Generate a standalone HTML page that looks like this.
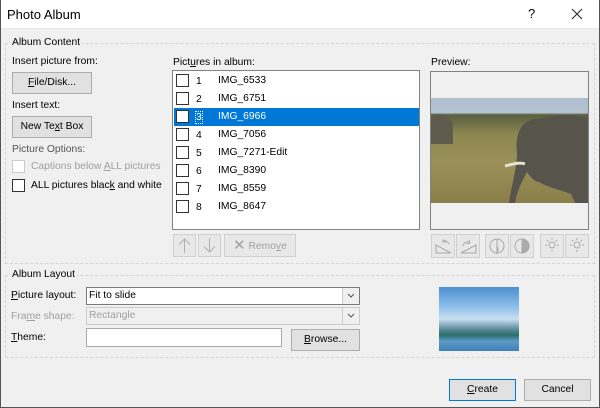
<!DOCTYPE html>
<html><head><style>
*{margin:0;padding:0;box-sizing:border-box}
body{width:600px;height:408px;overflow:hidden;background:#f0f0f0;font-family:"Liberation Sans",sans-serif;font-size:10.3px;color:#000;position:relative}
.a{position:absolute;white-space:nowrap}
.win{position:absolute;left:0;top:0;width:600px;height:408px;border:1px solid #555;border-top:none}
.title{position:absolute;left:0;top:0;width:600px;height:29px;background:#fff;border-bottom:1px solid #e6e6e6}
.grp{position:absolute;border:1px dashed #d5d5d5}
.lbl{background:#f0f0f0;padding:0 2px}
.btn{position:absolute;background:#e1e1e1;border:1px solid #adadad;text-align:center}
.dis{color:#a0a0a0;border-color:#d0d0d0;background:#e8e8e8}
.cb{position:absolute;width:13px;height:13px;border:1px solid #333;background:#fff}
.row{position:absolute;left:1px;width:245px;height:18px}
.row .cb{left:2px;top:2px}
.row .n{position:absolute;left:22px;top:4px}
.row .t{position:absolute;left:44px;top:3px}
u{text-decoration:underline}
.sel{position:absolute;background:#fff;border:1px solid #7a7a7a;height:18px}
.dd{position:absolute;right:0;top:0;width:17px;height:16px;border-left:1px solid #ccc;background:#f0f0f0}
</style></head><body>
<div class="title"></div>
<div class="a" style="left:7px;top:7px;font-size:13px">Photo Album</div>
<div class="a" style="left:528px;top:6px;font-size:13px">?</div>
<svg class="a" style="left:571px;top:8px" width="12" height="12"><path d="M1 1L11 11M11 1L1 11" stroke="#333" stroke-width="1.2"/></svg>

<div class="grp" style="left:5px;top:43px;width:590px;height:221px"></div>
<div class="a lbl" style="left:10px;top:37px">Album Content</div>
<div class="a" style="left:12px;top:56px">Insert picture from:</div>
<div class="btn" style="left:12px;top:72px;width:80px;height:22px;line-height:20px"><u>F</u>ile/Disk...</div>
<div class="a" style="left:12px;top:100px">Insert text:</div>
<div class="btn" style="left:12px;top:116px;width:80px;height:22px;line-height:20px">New Te<u>x</u>t Box</div>
<div class="a" style="left:12px;top:144px;color:#555">Picture Options:</div>
<div class="cb" style="left:12px;top:160px;border-color:#ccc"></div>
<div class="a" style="left:31px;top:161px;color:#a0a0a0">Captions below <u>A</u>LL pictures</div>
<div class="cb" style="left:12px;top:179px"></div>
<div class="a" style="left:31px;top:180px">ALL pictures blac<u>k</u> and white</div>

<div class="a" style="left:173px;top:57px">Pict<u>u</u>res in album:</div>
<div class="a" style="left:172px;top:70px;width:248px;height:160px;background:#fff;border:1px solid #828282">
<div class="row" style="top:1px"><div class="cb"></div><span class="n">1</span><span class="t">IMG_6533</span></div>
<div class="row" style="top:19px"><div class="cb"></div><span class="n">2</span><span class="t">IMG_6751</span></div>
<div class="row" style="top:37px;background:#0078d7;color:#fff"><div class="cb"></div><span class="n" style="outline:1px dotted #fff">3</span><span class="t">IMG_6966</span></div>
<div class="row" style="top:55px"><div class="cb"></div><span class="n">4</span><span class="t">IMG_7056</span></div>
<div class="row" style="top:73px"><div class="cb"></div><span class="n">5</span><span class="t">IMG_7271-Edit</span></div>
<div class="row" style="top:91px"><div class="cb"></div><span class="n">6</span><span class="t">IMG_8390</span></div>
<div class="row" style="top:109px"><div class="cb"></div><span class="n">7</span><span class="t">IMG_8559</span></div>
<div class="row" style="top:127px"><div class="cb"></div><span class="n">8</span><span class="t">IMG_8647</span></div>
</div>
<div class="btn dis" style="left:173px;top:234px;width:23px;height:23px"><svg width="21" height="21"><path d="M10.5 4V18M5 9.5L10.5 4L16 9.5" stroke="#b0b0b0" fill="none"/></svg></div>
<div class="btn dis" style="left:198px;top:234px;width:23px;height:23px"><svg width="21" height="21"><path d="M10.5 3V17M5 11.5L10.5 17L16 11.5" stroke="#b0b0b0" fill="none"/></svg></div>
<div class="btn dis" style="left:224px;top:234px;width:72px;height:23px;line-height:21px;text-align:left;padding-left:8px"><span style="font-size:15px;vertical-align:-1px">✕</span> Remo<u>v</u>e</div>

<div class="a" style="left:431px;top:57px">Preview:</div>
<div class="a" style="left:430px;top:71px;width:159px;height:159px;border:1px solid #828282;background:#f0f0f0;overflow:hidden">
<div style="position:absolute;left:0;top:26px;width:157px;height:105px;background:linear-gradient(180deg,#aebfd0 0,#b5c3cf 14%,#5a6040 16%,#6f6f48 24%,#8e8650 35%,#9a9058 60%,#8a7f4a 100%)"></div>
<svg style="position:absolute;left:0;top:26px" width="157" height="105">
<path d="M157 20 C140 14 120 18 100 22 C88 26 84 40 86 55 C86 70 80 90 78 105 L84 105 C86 92 92 82 96 74 C100 80 104 84 108 84 C118 90 130 92 140 96 L144 105 L157 105Z" fill="#56544b"/>
<path d="M74 68 C82 66 88 64 94 66" stroke="#e8e2d0" stroke-width="3" fill="none"/>
<path d="M0 18 C8 14 18 16 22 26 L22 46 L0 46Z" fill="#5f5b4c"/>
</svg>
</div>
<div class="btn dis" style="left:431px;top:234px;width:24px;height:24px"></div>
<div class="btn dis" style="left:456px;top:234px;width:24px;height:24px"></div>
<div class="btn dis" style="left:485px;top:234px;width:24px;height:24px"></div>
<div class="btn dis" style="left:510px;top:234px;width:24px;height:24px"></div>
<div class="btn dis" style="left:540px;top:234px;width:24px;height:24px"></div>
<div class="btn dis" style="left:565px;top:234px;width:24px;height:24px"></div>
<svg class="a" style="left:431px;top:234px" width="160" height="24" fill="none" stroke="#aaa">
<path d="M5 19H20L5 11Z M12 7a5 5 0 0 1 6 3M12 5l0 3 3 0"/>
<path d="M30 19H45V11Z M32 12a5 5 0 0 1 6-4M38 6l1 3-3 1"/>
<circle cx="66" cy="12" r="7"/><path d="M66 5V19" /><path d="M66 12A7 7 0 0 1 66 19Z" fill="#aaa"/>
<circle cx="91" cy="12" r="7"/><path d="M91 5A7 7 0 0 1 91 19Z" fill="#aaa"/>
<circle cx="121" cy="11" r="3"/><path d="M121 4v2M121 16v2M114 11h2M126 11h2M116 6l1.5 1.5M126 6l-1.5 1.5"/>
<circle cx="146" cy="11" r="3"/><path d="M146 4v2M146 16v2M139 11h2M151 11h2M141 6l1.5 1.5M151 6l-1.5 1.5"/>
</svg>

<div class="grp" style="left:5px;top:275px;width:590px;height:83px"></div>
<div class="a lbl" style="left:10px;top:269px">Album Layout</div>
<div class="a" style="left:11px;top:290px"><u>P</u>icture layout:</div>
<div class="sel" style="left:86px;top:287px;width:274px"><span style="position:absolute;left:2px;top:2px">Fit to slide</span><div class="dd"><svg width="16" height="16"><path d="M5 6L8 9L11 6" stroke="#555" fill="none"/></svg></div></div>
<div class="a" style="left:11px;top:311px;color:#a0a0a0">Fra<u>m</u>e shape:</div>
<div class="sel" style="left:86px;top:307px;width:274px;border-color:#ccc;background:#f0f0f0"><span style="position:absolute;left:2px;top:2px;color:#a0a0a0">Rectangle</span><div class="dd"><svg width="16" height="16"><path d="M5 6L8 9L11 6" stroke="#555" fill="none"/></svg></div></div>
<div class="a" style="left:11px;top:332px"><u>T</u>heme:</div>
<div class="a" style="left:86px;top:328px;width:196px;height:19px;background:#fff;border:1px solid #aaa"></div>
<div class="btn" style="left:291px;top:329px;width:69px;height:22px;line-height:20px"><u>B</u>rowse...</div>
<div class="a" style="left:439px;top:287px;width:80px;height:64px;background:linear-gradient(180deg,#4b90d0 0,#8cbde8 30%,#c9e0f2 50%,#5d8a9a 66%,#2a6f6a 75%,#5d9ac9 85%,#3f7fb8 100%)"></div>

<div class="btn" style="left:449px;top:379px;width:67px;height:22px;line-height:20px;border:1px solid #0078d7"><u>C</u>reate</div>
<div class="btn" style="left:524px;top:379px;width:67px;height:22px;line-height:20px">Cancel</div>
<div class="win"></div>
</body></html>
